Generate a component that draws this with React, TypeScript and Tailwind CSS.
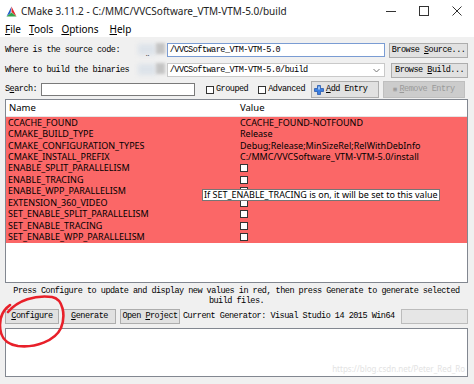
import React from "react";

const mono = "font-['Liberation_Mono',monospace] text-[8.5px] tracking-[-0.5px] text-black";
const sans = "font-['Noto_Sans',sans-serif]";

const rows: [string, string | null][] = [
  ["CCACHE_FOUND", "CCACHE_FOUND-NOTFOUND"],
  ["CMAKE_BUILD_TYPE", "Release"],
  ["CMAKE_CONFIGURATION_TYPES", "Debug;Release;MinSizeRel;RelWithDebInfo"],
  ["CMAKE_INSTALL_PREFIX", "C:/MMC/VVCSoftware_VTM-VTM-5.0/install"],
  ["ENABLE_SPLIT_PARALLELISM", null],
  ["ENABLE_TRACING", null],
  ["ENABLE_WPP_PARALLELISM", null],
  ["EXTENSION_360_VIDEO", null],
  ["SET_ENABLE_SPLIT_PARALLELISM", null],
  ["SET_ENABLE_TRACING", null],
  ["SET_ENABLE_WPP_PARALLELISM", null],
];

const Btn = ({ children, className = "" }: any) => (
  <div
    className={`h-full flex items-center justify-center bg-[#e1e1e1] border border-[#adadad] whitespace-pre ${mono} ${className}`}
  >
    <span>{children}</span>
  </div>
);

const Check = () => (
  <div className="w-[8px] h-[8px] bg-white border border-[#333]" />
);

const Blur = ({ dots }: { dots?: boolean }) => (
  <div className="relative w-[29px] h-full shrink-0">
    <div className="absolute left-0 top-[2px] w-[18px] h-[11px] bg-[#dde3ea] blur-[2px]" />
    {dots && <div className="absolute left-[8px] top-[8px] text-[7px] leading-none text-[#444]">..</div>}
    <div className="absolute left-[18px] top-[1px] w-[9px] h-[11px] bg-[#c4c4c4] blur-[1.5px]" />
  </div>
);

export default function App() {
  return (
    <div className="relative w-[474px] h-[384px] bg-[#f0f0f0] overflow-hidden">
      {/* title bar */}
      <div className="h-[22px] bg-white flex items-center">
        <svg className="ml-[6px] w-[11px] h-[11px]" viewBox="0 0 11 11">
          <polygon points="5.5,0.5 0.5,10.5 4.5,7" fill="#1c57c9" />
          <polygon points="5.5,0.5 10.5,10.5 5.5,6" fill="#e0262a" />
          <polygon points="0.5,10.5 10.5,10.5 5.5,6.5" fill="#33a34a" />
        </svg>
        <span className={`${sans} ml-[4px] text-[10px] text-[#222]`}>
          CMake 3.11.2 - C:/MMC/VVCSoftware_VTM-VTM-5.0/build
        </span>
        <div className="ml-auto flex items-center mr-[12px] gap-[23px]">
          <svg width="10" height="10" viewBox="0 0 10 10"><line x1="0" y1="5.5" x2="10" y2="5.5" stroke="#333" /></svg>
          <svg width="10" height="10" viewBox="0 0 10 10"><rect x="0.5" y="0.5" width="9" height="9" fill="none" stroke="#333" /></svg>
          <svg width="10" height="10" viewBox="0 0 10 10"><path d="M0.5 0.5L9.5 9.5M9.5 0.5L0.5 9.5" stroke="#333" /></svg>
        </div>
      </div>

      {/* menu */}
      <div className={`h-[15px] bg-white flex items-center pl-[5px] gap-[8px] text-[10px] text-black ${sans}`}>
        <span><u>F</u>ile</span>
        <span><u>T</u>ools</span>
        <span><u>O</u>ptions</span>
        <span className="ml-[3px]"><u>H</u>elp</span>
      </div>

      <div className="pl-[5px] pr-[6px]">
        {/* source */}
        <div className="mt-[5px] h-[16px] flex items-center">
          <div className={`w-[133px] ${mono}`}>Where is the source code:</div>
          <Blur dots />
          <div className={`w-[219px] h-[14px] bg-white border border-[#7a9cd3] flex items-center pl-[2px] ${mono}`}>
            /VVCSoftware_VTM-VTM-5.0
          </div>
          <Btn className="ml-[4px] w-[79px] !h-[15px]">Browse <u>S</u>ource...</Btn>
        </div>

        {/* build */}
        <div className="mt-[4px] h-[16px] flex items-center">
          <div className={`w-[133px] ${mono}`}>Where to build the binaries</div>
          <Blur />
          <div className={`w-[219px] h-[14px] bg-white border border-[#c9c9c9] flex items-center pl-[2px] ${mono}`}>
            <span>/VVCSoftware_VTM-VTM-5.0/build</span>
            <svg className="ml-auto mr-[4px]" width="7" height="5" viewBox="0 0 7 5"><path d="M0.5 1L3.5 4L6.5 1" fill="none" stroke="#777" /></svg>
          </div>
          <Btn className="ml-[6px] w-[77px] !h-[15px]">Browse <u>B</u>uild...</Btn>
        </div>

        {/* search */}
        <div className="mt-[3px] h-[17px] flex items-center">
          <div className={`w-[36px] ${mono}`}>S<u>e</u>arch:</div>
          <div className="w-[154px] h-[13px] bg-white border border-[#7a7a7a]" />
          <div className="ml-[11px] w-[8px] h-[8px] bg-white border border-[#333]" />
          <span className={`ml-[2px] ${mono}`}>Grouped</span>
          <div className="ml-[10px] w-[8px] h-[8px] bg-white border border-[#333]" />
          <span className={`ml-[2px] ${mono}`}>Advanced</span>
          <div className={`ml-[6px] w-[68px] h-full flex items-center pl-[2px] bg-[#e1e1e1] border border-[#adadad] whitespace-pre ${mono}`}>
            <svg width="10" height="10" viewBox="0 0 10 10" className="mr-[2px]">
              <path d="M3.5 0.5h3v3h3v3h-3v3h-3v-3h-3v-3h3z" fill="#3b7fe0" stroke="#1d4fa8" strokeWidth="0.7" />
              <path d="M4 1.5h2v3h-2z" fill="#9cc4f5" />
            </svg>
            <span><u>A</u>dd Entry</span>
          </div>
          <div className={`ml-[4px] w-[82px] h-full flex items-center justify-center bg-[#cccccc] border border-[#bfbfbf] whitespace-pre ${mono} !text-[#9a9a9a]`}>
            <span className="mr-[3px] text-[6px]">▦</span>
            <span><u>R</u>emove Entry</span>
          </div>
        </div>

        {/* table */}
        <div className={`mt-[1px] h-[184px] bg-white border border-[#828790] ${sans} relative`}>
          <div className="h-[17px] flex items-center border-b border-[#e5e5e5] text-[9.5px] text-black">
            <div className="w-[231px] pl-[3px]">Name</div>
            <div className="pl-[3px]">Value</div>
          </div>
          {rows.map(([name, value]) => (
            <div key={name} className="h-[11.45px] bg-[#fb6767] flex items-center text-[9px] leading-[10px] text-black">
              <div className="w-[231px] pl-[2px]">{name}</div>
              <div className="pl-[3px]">{value ?? <Check />}</div>
            </div>
          ))}
          <div className="absolute left-[196px] top-[89px] h-[12px] px-[1px] bg-white border border-[#767676] flex items-center text-[9px] text-black whitespace-nowrap">
            If SET_ENABLE_TRACING is on, it will be set to this value
          </div>
        </div>

        {/* message */}
        <div className={`mt-[3px] text-center leading-[10px] ${mono}`}>
          Press Configure to update and display new values in red, then press Generate to generate selected
          <br />
          build files.
        </div>

        {/* buttons */}
        <div className="mt-[3px] h-[15px] flex items-center">
          <Btn className="w-[54px]"><u>C</u>onfigure</Btn>
          <Btn className="ml-[4px] w-[53px]"><u>G</u>enerate</Btn>
          <Btn className="ml-[4px] w-[60px]">Open <u>P</u>roject</Btn>
          <span className={`ml-[3px] ${mono}`}>Current Generator: Visual Studio 14 2015 Win64</span>
          <div className="ml-auto w-[67px] h-full bg-[#e6e6e6] border border-[#bcbcbc]" />
        </div>

        {/* output */}
        <div className="mt-[4px] h-[49px] bg-white border border-[#828790] flex items-end justify-end pr-[2px] pb-[1px]">
          <span className={`${sans} text-[8px] text-[#e3e3e3]`}>https://blog.csdn.net/Peter_Red_Ro</span>
        </div>
      </div>

      {/* hand drawn red circle */}
      <svg className="absolute left-0 top-0 pointer-events-none" width="474" height="384">
        <path
          d="M 8 312 C 18 300, 35 295, 52 297 C 63 299, 66 315, 61 328 C 55 341, 35 348, 18 346 C 6 344, 0 338, 0 325 C 0 316, 3 310, 10 305"
          fill="none"
          stroke="#e8202a"
          strokeWidth="2.6"
          strokeLinecap="round"
        />
      </svg>
    </div>
  );
}
